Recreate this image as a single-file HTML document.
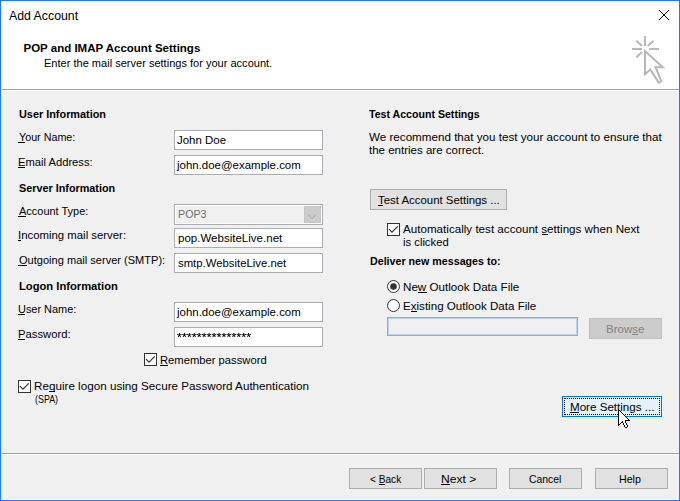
<!DOCTYPE html>
<html><head><meta charset="utf-8"><style>
html,body{margin:0;padding:0;}
body{width:680px;height:501px;overflow:hidden;position:relative;background:#f0f0f0;font-family:"Liberation Sans",sans-serif;}
.a{position:absolute;}
.t{position:absolute;white-space:pre;line-height:16px;height:16px;transform-origin:0 0;font-family:"Liberation Sans",sans-serif;}
.tb{position:absolute;box-sizing:border-box;border:1px solid #abadb3;background:#fff;}
.btn{position:absolute;box-sizing:border-box;border:1px solid #adadad;background:#e1e1e1;}
.cb{position:absolute;box-sizing:border-box;width:13px;height:13px;border:1px solid #333;background:#fff;}
.u{position:absolute;height:1px;background:#000;}
</style></head><body>

<div class="a" style="left:0;top:0;width:680px;height:89px;background:#fff"></div>
<div class="a" style="left:0;top:89px;width:680px;height:1px;background:#a0a0a0"></div>
<div class="a" style="left:0;top:90px;width:680px;height:1px;background:#fff"></div>
<div class="a" style="left:0;top:453px;width:680px;height:1px;background:#a0a0a0"></div>
<div class="a" style="left:0;top:454px;width:680px;height:1px;background:#fff"></div>
<svg class="a" style="left:659px;top:10px" width="11" height="11" viewBox="0 0 11 11" shape-rendering="crispEdges" fill="#000"><rect x="0" y="0" width="1" height="1"/><rect x="9" y="0" width="1" height="1"/><rect x="1" y="1" width="1" height="1"/><rect x="8" y="1" width="1" height="1"/><rect x="2" y="2" width="1" height="1"/><rect x="7" y="2" width="1" height="1"/><rect x="3" y="3" width="1" height="1"/><rect x="6" y="3" width="1" height="1"/><rect x="4" y="4" width="1" height="1"/><rect x="5" y="4" width="1" height="1"/><rect x="5" y="5" width="1" height="1"/><rect x="4" y="5" width="1" height="1"/><rect x="6" y="6" width="1" height="1"/><rect x="3" y="6" width="1" height="1"/><rect x="7" y="7" width="1" height="1"/><rect x="2" y="7" width="1" height="1"/><rect x="8" y="8" width="1" height="1"/><rect x="1" y="8" width="1" height="1"/><rect x="9" y="9" width="1" height="1"/><rect x="0" y="9" width="1" height="1"/></svg>
<svg class="a" style="left:628px;top:34px" width="40" height="52" viewBox="628 34 40 52" fill="none" stroke="#b8b8b8" stroke-width="2">
<path d="M645 36 V46 M632 49 H642 M649 49 H659 M636.3 40.7 L642 46 M653.4 40.7 L647.7 46 M636.3 57.4 L642 52"/>
<path d="M645 51 V74.3 L650.3 69.6 L658.8 82.6 L661.4 81.3 L655.6 67.3 H662.8 Z" stroke-linejoin="miter"/>
</svg>
<div class="tb" style="left:174px;top:130px;width:149px;height:20px"></div>
<div class="tb" style="left:174px;top:155px;width:149px;height:20px"></div>
<div class="tb" style="left:174px;top:228px;width:149px;height:20px"></div>
<div class="tb" style="left:174px;top:253px;width:149px;height:20px"></div>
<div class="tb" style="left:174px;top:302px;width:149px;height:20px"></div>
<div class="tb" style="left:174px;top:327px;width:149px;height:20px"></div>
<div class="tb" style="left:174px;top:204px;width:149px;height:21px;background:#f0f0f0;box-shadow:inset 0 0 0 1px #fff"></div>
<div class="a" style="left:304px;top:206px;width:17px;height:17px;box-sizing:border-box;background:#cccccc;border:1px solid #c4c4c4"></div>
<svg class="a" style="left:304px;top:206px" width="17" height="17" viewBox="0 0 17 17" fill="none" stroke="#a0a0a0" stroke-width="1"><path d="M4 8.5 L8 12.5 L12 8.5"/></svg>
<svg class="a" style="left:0;top:0" width="680" height="501" viewBox="0 0 680 501" fill="#000"><path fill="none" stroke="#000" stroke-width="1" d="M179.40 335.20 L179.40 332.90 M179.40 335.20 L181.59 334.49 M179.40 335.20 L180.75 337.06 M179.40 335.20 L178.05 337.06 M179.40 335.20 L177.21 334.49 M184.35 335.20 L184.35 332.90 M184.35 335.20 L186.54 334.49 M184.35 335.20 L185.70 337.06 M184.35 335.20 L183.00 337.06 M184.35 335.20 L182.16 334.49 M189.30 335.20 L189.30 332.90 M189.30 335.20 L191.49 334.49 M189.30 335.20 L190.65 337.06 M189.30 335.20 L187.95 337.06 M189.30 335.20 L187.11 334.49 M194.25 335.20 L194.25 332.90 M194.25 335.20 L196.44 334.49 M194.25 335.20 L195.60 337.06 M194.25 335.20 L192.90 337.06 M194.25 335.20 L192.06 334.49 M199.20 335.20 L199.20 332.90 M199.20 335.20 L201.39 334.49 M199.20 335.20 L200.55 337.06 M199.20 335.20 L197.85 337.06 M199.20 335.20 L197.01 334.49 M204.15 335.20 L204.15 332.90 M204.15 335.20 L206.34 334.49 M204.15 335.20 L205.50 337.06 M204.15 335.20 L202.80 337.06 M204.15 335.20 L201.96 334.49 M209.10 335.20 L209.10 332.90 M209.10 335.20 L211.29 334.49 M209.10 335.20 L210.45 337.06 M209.10 335.20 L207.75 337.06 M209.10 335.20 L206.91 334.49 M214.05 335.20 L214.05 332.90 M214.05 335.20 L216.24 334.49 M214.05 335.20 L215.40 337.06 M214.05 335.20 L212.70 337.06 M214.05 335.20 L211.86 334.49 M219.00 335.20 L219.00 332.90 M219.00 335.20 L221.19 334.49 M219.00 335.20 L220.35 337.06 M219.00 335.20 L217.65 337.06 M219.00 335.20 L216.81 334.49 M223.95 335.20 L223.95 332.90 M223.95 335.20 L226.14 334.49 M223.95 335.20 L225.30 337.06 M223.95 335.20 L222.60 337.06 M223.95 335.20 L221.76 334.49 M228.90 335.20 L228.90 332.90 M228.90 335.20 L231.09 334.49 M228.90 335.20 L230.25 337.06 M228.90 335.20 L227.55 337.06 M228.90 335.20 L226.71 334.49 M233.85 335.20 L233.85 332.90 M233.85 335.20 L236.04 334.49 M233.85 335.20 L235.20 337.06 M233.85 335.20 L232.50 337.06 M233.85 335.20 L231.66 334.49 M238.80 335.20 L238.80 332.90 M238.80 335.20 L240.99 334.49 M238.80 335.20 L240.15 337.06 M238.80 335.20 L237.45 337.06 M238.80 335.20 L236.61 334.49 M243.75 335.20 L243.75 332.90 M243.75 335.20 L245.94 334.49 M243.75 335.20 L245.10 337.06 M243.75 335.20 L242.40 337.06 M243.75 335.20 L241.56 334.49 M248.70 335.20 L248.70 332.90 M248.70 335.20 L250.89 334.49 M248.70 335.20 L250.05 337.06 M248.70 335.20 L247.35 337.06 M248.70 335.20 L246.51 334.49 "/></svg>
<div class="cb" style="left:144px;top:353px"></div>
<svg class="a" style="left:144px;top:353px" width="13" height="13" viewBox="0 0 13 13"><path d="M2 6.2 L5 9.2 L10.8 3.4" fill="none" stroke="#333" stroke-width="1.2"/></svg>
<div class="cb" style="left:18px;top:380px"></div>
<svg class="a" style="left:18px;top:380px" width="13" height="13" viewBox="0 0 13 13"><path d="M2 6.2 L5 9.2 L10.8 3.4" fill="none" stroke="#333" stroke-width="1.2"/></svg>
<div class="cb" style="left:387px;top:223px"></div>
<svg class="a" style="left:387px;top:223px" width="13" height="13" viewBox="0 0 13 13"><path d="M2 6.2 L5 9.2 L10.8 3.4" fill="none" stroke="#333" stroke-width="1.2"/></svg>
<svg class="a" style="left:387px;top:280px" width="13" height="13" viewBox="0 0 13 13"><circle cx="6.5" cy="6.5" r="6" fill="#fff" stroke="#333" stroke-width="1"/><circle cx="6.5" cy="6.5" r="3.3" fill="#333"/></svg>
<svg class="a" style="left:387px;top:299px" width="13" height="13" viewBox="0 0 13 13"><circle cx="6.5" cy="6.5" r="6" fill="#fff" stroke="#333" stroke-width="1"/></svg>
<div class="a" style="left:387px;top:317px;width:191px;height:19px;box-sizing:border-box;border:1px solid #a8a8a8;background:#f0f0f0;box-shadow:inset 0 0 0 1px #b9d5f5"></div>
<div class="a" style="left:589px;top:318px;width:73px;height:21px;box-sizing:border-box;border:1px solid #bfbfbf;background:#cccccc"></div>
<div class="btn" style="left:370px;top:189px;width:137px;height:21px"></div>
<div class="btn" style="left:349px;top:468px;width:73px;height:21px"></div>
<div class="btn" style="left:424px;top:468px;width:73px;height:21px"></div>
<div class="btn" style="left:509px;top:468px;width:73px;height:21px"></div>
<div class="btn" style="left:595px;top:468px;width:73px;height:21px"></div>
<div class="a" style="left:562px;top:396px;width:100px;height:21px;box-sizing:border-box;border:1px solid #0078d7;background:#e5f1fb"></div>
<div class="a" style="left:564px;top:398px;width:96px;height:17px;box-sizing:border-box;border:1px dotted #000"></div>
<div class="t" id="title" style="left:9.20px;top:8.00px;font-size:12px;font-weight:400;color:#000;transform:scaleX(1.0250)">Add Account</div>
<div class="t" id="hdr1" style="left:23.50px;top:40.00px;font-size:11.5px;font-weight:700;color:#000;transform:scaleX(1.0000)">POP and IMAP Account Settings</div>
<div class="t" id="hdr2" style="left:43.54px;top:55.00px;font-size:11.5px;font-weight:400;color:#000;transform:scaleX(0.9597)">Enter the mail server settings for your account.</div>
<div class="t" id="ui" style="left:18.50px;top:106.00px;font-size:11.5px;font-weight:700;color:#000;transform:scaleX(0.9457)">User Information</div>
<div class="t" id="yn" style="left:18.50px;top:129.00px;font-size:11.5px;font-weight:400;color:#000;transform:scaleX(0.9333)">Your Name:</div>
<div class="t" id="ea" style="left:17.53px;top:154.00px;font-size:11.5px;font-weight:400;color:#000;transform:scaleX(0.9733)">Email Address:</div>
<div class="t" id="si" style="left:18.50px;top:180.00px;font-size:11.5px;font-weight:700;color:#000;transform:scaleX(0.9402)">Server Information</div>
<div class="t" id="at" style="left:18.50px;top:203.00px;font-size:11.5px;font-weight:400;color:#000;transform:scaleX(0.9542)">Account Type:</div>
<div class="t" id="ims" style="left:17.51px;top:227.00px;font-size:11.5px;font-weight:400;color:#000;transform:scaleX(0.9889)">Incoming mail server:</div>
<div class="t" id="oms" style="left:18.50px;top:252.00px;font-size:11.5px;font-weight:400;color:#000;transform:scaleX(0.9612)">Outgoing mail server (SMTP):</div>
<div class="t" id="li" style="left:18.50px;top:278.00px;font-size:11.5px;font-weight:700;color:#000;transform:scaleX(0.9733)">Logon Information</div>
<div class="t" id="un" style="left:17.55px;top:301.00px;font-size:11.5px;font-weight:400;color:#000;transform:scaleX(0.9500)">User Name:</div>
<div class="t" id="pw" style="left:17.52px;top:326.00px;font-size:11.5px;font-weight:400;color:#000;transform:scaleX(0.9808)">Password:</div>
<div class="t" id="rp" style="left:159.62px;top:352.00px;font-size:11.5px;font-weight:400;color:#000;transform:scaleX(0.9759)">Remember password</div>
<div class="t" id="spa1" style="left:33.99px;top:378.00px;font-size:11.5px;font-weight:400;color:#000;transform:scaleX(1.0148)">Require logon using Secure Password Authentication</div>
<div class="t" id="spa2" style="left:35.00px;top:391.00px;font-size:11.5px;font-weight:400;color:#000;transform:scaleX(0.7724)">(SPA)</div>
<div class="t" id="tas" style="left:369.40px;top:106.00px;font-size:11.5px;font-weight:700;color:#000;transform:scaleX(0.9217)">Test Account Settings</div>
<div class="t" id="rec1" style="left:369.40px;top:129.00px;font-size:11.5px;font-weight:400;color:#000;transform:scaleX(1.0117)">We recommend that you test your account to ensure that</div>
<div class="t" id="rec2" style="left:369.40px;top:142.00px;font-size:11.5px;font-weight:400;color:#000;transform:scaleX(1.0009)">the entries are correct.</div>
<div class="t" id="tasb" style="left:377.80px;top:192.00px;font-size:11.5px;font-weight:400;color:#000;transform:scaleX(0.9918)">Test Account Settings ...</div>
<div class="t" id="auto1" style="left:403.40px;top:221.00px;font-size:11.5px;font-weight:400;color:#000;transform:scaleX(1.0111)">Automatically test account settings when Next</div>
<div class="t" id="auto2" style="left:403.40px;top:234.00px;font-size:11.5px;font-weight:400;color:#000;transform:scaleX(0.9783)">is clicked</div>
<div class="t" id="dnm" style="left:369.70px;top:253.00px;font-size:11.5px;font-weight:700;color:#000;transform:scaleX(0.9286)">Deliver new messages to:</div>
<div class="t" id="nodf" style="left:403.49px;top:279.00px;font-size:11.5px;font-weight:400;color:#000;transform:scaleX(1.0105)">New Outlook Data File</div>
<div class="t" id="eodf" style="left:403.49px;top:298.00px;font-size:11.5px;font-weight:400;color:#000;transform:scaleX(1.0076)">Existing Outlook Data File</div>
<div class="t" id="browse" style="left:605.60px;top:321.00px;font-size:11.5px;font-weight:400;color:#838383;transform:scaleX(1.0027)">Browse</div>
<div class="t" id="more" style="left:569.59px;top:399.00px;font-size:11.5px;font-weight:400;color:#000;transform:scaleX(1.0085)">More Settings ...</div>
<div class="t" id="back" style="left:369.80px;top:471.00px;font-size:11.5px;font-weight:400;color:#000;transform:scaleX(0.8806)">&lt; Back</div>
<div class="t" id="next" style="left:441.45px;top:471.00px;font-size:11.5px;font-weight:400;color:#000;transform:scaleX(1.0500)">Next &gt;</div>
<div class="t" id="cancel" style="left:528.60px;top:471.00px;font-size:11.5px;font-weight:400;color:#000;transform:scaleX(0.9057)">Cancel</div>
<div class="t" id="help" style="left:619.37px;top:471.00px;font-size:11.5px;font-weight:400;color:#000;transform:scaleX(0.9261)">Help</div>
<div class="t" id="v_name" style="left:177.00px;top:132.00px;font-size:11.5px;font-weight:400;color:#000;transform:scaleX(0.9959)">John Doe</div>
<div class="t" id="v_email" style="left:177.00px;top:157.00px;font-size:11.5px;font-weight:400;color:#000;transform:scaleX(0.9968)">john.doe@example.com</div>
<div class="t" id="v_pop3" style="left:177.67px;top:206.00px;font-size:11.5px;font-weight:400;color:#6d6d6d;transform:scaleX(0.9300)">POP3</div>
<div class="t" id="v_in" style="left:177.50px;top:230.00px;font-size:11.5px;font-weight:400;color:#000;transform:scaleX(1.0024)">pop.WebsiteLive.net</div>
<div class="t" id="v_out" style="left:177.50px;top:255.00px;font-size:11.5px;font-weight:400;color:#000;transform:scaleX(0.9864)">smtp.WebsiteLive.net</div>
<div class="t" id="v_user" style="left:177.00px;top:304.00px;font-size:11.5px;font-weight:400;color:#000;transform:scaleX(0.9968)">john.doe@example.com</div>
<div class="a" style="left:1px;top:1px;width:1px;height:499px;background:#fff7ec"></div>
<div class="a" style="left:1px;top:499px;width:678px;height:1px;background:#fff7ec"></div>
<div class="a" style="left:0;top:0;width:680px;height:501px;box-sizing:border-box;border:1px solid #2479f2"></div>
<svg class="a" style="left:618px;top:409px" width="12" height="20" viewBox="0 0 12 20" shape-rendering="crispEdges"><rect x="0" y="0" width="1" height="1" fill="#000"/><rect x="0" y="1" width="1" height="1" fill="#000"/><rect x="1" y="1" width="1" height="1" fill="#000"/><rect x="0" y="2" width="1" height="1" fill="#000"/><rect x="1" y="2" width="1" height="1" fill="#fff"/><rect x="2" y="2" width="1" height="1" fill="#000"/><rect x="0" y="3" width="1" height="1" fill="#000"/><rect x="1" y="3" width="1" height="1" fill="#fff"/><rect x="2" y="3" width="1" height="1" fill="#fff"/><rect x="3" y="3" width="1" height="1" fill="#000"/><rect x="0" y="4" width="1" height="1" fill="#000"/><rect x="1" y="4" width="1" height="1" fill="#fff"/><rect x="2" y="4" width="1" height="1" fill="#fff"/><rect x="3" y="4" width="1" height="1" fill="#fff"/><rect x="4" y="4" width="1" height="1" fill="#000"/><rect x="0" y="5" width="1" height="1" fill="#000"/><rect x="1" y="5" width="1" height="1" fill="#fff"/><rect x="2" y="5" width="1" height="1" fill="#fff"/><rect x="3" y="5" width="1" height="1" fill="#fff"/><rect x="4" y="5" width="1" height="1" fill="#fff"/><rect x="5" y="5" width="1" height="1" fill="#000"/><rect x="0" y="6" width="1" height="1" fill="#000"/><rect x="1" y="6" width="1" height="1" fill="#fff"/><rect x="2" y="6" width="1" height="1" fill="#fff"/><rect x="3" y="6" width="1" height="1" fill="#fff"/><rect x="4" y="6" width="1" height="1" fill="#fff"/><rect x="5" y="6" width="1" height="1" fill="#fff"/><rect x="6" y="6" width="1" height="1" fill="#000"/><rect x="0" y="7" width="1" height="1" fill="#000"/><rect x="1" y="7" width="1" height="1" fill="#fff"/><rect x="2" y="7" width="1" height="1" fill="#fff"/><rect x="3" y="7" width="1" height="1" fill="#fff"/><rect x="4" y="7" width="1" height="1" fill="#fff"/><rect x="5" y="7" width="1" height="1" fill="#fff"/><rect x="6" y="7" width="1" height="1" fill="#fff"/><rect x="7" y="7" width="1" height="1" fill="#000"/><rect x="0" y="8" width="1" height="1" fill="#000"/><rect x="1" y="8" width="1" height="1" fill="#fff"/><rect x="2" y="8" width="1" height="1" fill="#fff"/><rect x="3" y="8" width="1" height="1" fill="#fff"/><rect x="4" y="8" width="1" height="1" fill="#fff"/><rect x="5" y="8" width="1" height="1" fill="#fff"/><rect x="6" y="8" width="1" height="1" fill="#fff"/><rect x="7" y="8" width="1" height="1" fill="#fff"/><rect x="8" y="8" width="1" height="1" fill="#000"/><rect x="0" y="9" width="1" height="1" fill="#000"/><rect x="1" y="9" width="1" height="1" fill="#fff"/><rect x="2" y="9" width="1" height="1" fill="#fff"/><rect x="3" y="9" width="1" height="1" fill="#fff"/><rect x="4" y="9" width="1" height="1" fill="#fff"/><rect x="5" y="9" width="1" height="1" fill="#fff"/><rect x="6" y="9" width="1" height="1" fill="#fff"/><rect x="7" y="9" width="1" height="1" fill="#fff"/><rect x="8" y="9" width="1" height="1" fill="#fff"/><rect x="9" y="9" width="1" height="1" fill="#000"/><rect x="0" y="10" width="1" height="1" fill="#000"/><rect x="1" y="10" width="1" height="1" fill="#fff"/><rect x="2" y="10" width="1" height="1" fill="#fff"/><rect x="3" y="10" width="1" height="1" fill="#fff"/><rect x="4" y="10" width="1" height="1" fill="#fff"/><rect x="5" y="10" width="1" height="1" fill="#fff"/><rect x="6" y="10" width="1" height="1" fill="#fff"/><rect x="7" y="10" width="1" height="1" fill="#fff"/><rect x="8" y="10" width="1" height="1" fill="#fff"/><rect x="9" y="10" width="1" height="1" fill="#fff"/><rect x="10" y="10" width="1" height="1" fill="#000"/><rect x="0" y="11" width="1" height="1" fill="#000"/><rect x="1" y="11" width="1" height="1" fill="#fff"/><rect x="2" y="11" width="1" height="1" fill="#fff"/><rect x="3" y="11" width="1" height="1" fill="#fff"/><rect x="4" y="11" width="1" height="1" fill="#fff"/><rect x="5" y="11" width="1" height="1" fill="#fff"/><rect x="6" y="11" width="1" height="1" fill="#fff"/><rect x="7" y="11" width="1" height="1" fill="#000"/><rect x="8" y="11" width="1" height="1" fill="#000"/><rect x="9" y="11" width="1" height="1" fill="#000"/><rect x="10" y="11" width="1" height="1" fill="#000"/><rect x="11" y="11" width="1" height="1" fill="#000"/><rect x="0" y="12" width="1" height="1" fill="#000"/><rect x="1" y="12" width="1" height="1" fill="#fff"/><rect x="2" y="12" width="1" height="1" fill="#fff"/><rect x="3" y="12" width="1" height="1" fill="#fff"/><rect x="4" y="12" width="1" height="1" fill="#000"/><rect x="5" y="12" width="1" height="1" fill="#fff"/><rect x="6" y="12" width="1" height="1" fill="#fff"/><rect x="7" y="12" width="1" height="1" fill="#000"/><rect x="0" y="13" width="1" height="1" fill="#000"/><rect x="1" y="13" width="1" height="1" fill="#fff"/><rect x="2" y="13" width="1" height="1" fill="#fff"/><rect x="3" y="13" width="1" height="1" fill="#000"/><rect x="4" y="13" width="1" height="1" fill="#000"/><rect x="5" y="13" width="1" height="1" fill="#fff"/><rect x="6" y="13" width="1" height="1" fill="#fff"/><rect x="7" y="13" width="1" height="1" fill="#000"/><rect x="0" y="14" width="1" height="1" fill="#000"/><rect x="1" y="14" width="1" height="1" fill="#fff"/><rect x="2" y="14" width="1" height="1" fill="#000"/><rect x="5" y="14" width="1" height="1" fill="#000"/><rect x="6" y="14" width="1" height="1" fill="#fff"/><rect x="7" y="14" width="1" height="1" fill="#fff"/><rect x="8" y="14" width="1" height="1" fill="#000"/><rect x="0" y="15" width="1" height="1" fill="#000"/><rect x="1" y="15" width="1" height="1" fill="#000"/><rect x="5" y="15" width="1" height="1" fill="#000"/><rect x="6" y="15" width="1" height="1" fill="#fff"/><rect x="7" y="15" width="1" height="1" fill="#fff"/><rect x="8" y="15" width="1" height="1" fill="#000"/><rect x="0" y="16" width="1" height="1" fill="#000"/><rect x="6" y="16" width="1" height="1" fill="#000"/><rect x="7" y="16" width="1" height="1" fill="#fff"/><rect x="8" y="16" width="1" height="1" fill="#fff"/><rect x="9" y="16" width="1" height="1" fill="#000"/><rect x="6" y="17" width="1" height="1" fill="#000"/><rect x="7" y="17" width="1" height="1" fill="#fff"/><rect x="8" y="17" width="1" height="1" fill="#fff"/><rect x="9" y="17" width="1" height="1" fill="#000"/><rect x="7" y="18" width="1" height="1" fill="#000"/><rect x="8" y="18" width="1" height="1" fill="#000"/></svg>
<div class="u" style="left:18px;top:142px;width:7px;background:#000"></div>
<div class="u" style="left:18px;top:167px;width:7px;background:#000"></div>
<div class="u" style="left:18px;top:216px;width:8px;background:#000"></div>
<div class="u" style="left:18px;top:240px;width:3px;background:#000"></div>
<div class="u" style="left:18px;top:265px;width:9px;background:#000"></div>
<div class="u" style="left:18px;top:314px;width:7px;background:#000"></div>
<div class="u" style="left:18px;top:339px;width:7px;background:#000"></div>
<div class="u" style="left:160px;top:365px;width:8px;background:#000"></div>
<div class="u" style="left:49px;top:391px;width:6px;background:#000"></div>
<div class="u" style="left:378px;top:205px;width:5px;background:#000"></div>
<div class="u" style="left:542px;top:234px;width:6px;background:#000"></div>
<div class="u" style="left:418px;top:292px;width:9px;background:#000"></div>
<div class="u" style="left:411px;top:311px;width:6px;background:#000"></div>
<div class="u" style="left:632px;top:334px;width:6px;background:#838383"></div>
<div class="u" style="left:570px;top:412px;width:9px;background:#000"></div>
<div class="u" style="left:379px;top:484px;width:6px;background:#000"></div>
<div class="u" style="left:441px;top:484px;width:9px;background:#000"></div>
</body></html>
